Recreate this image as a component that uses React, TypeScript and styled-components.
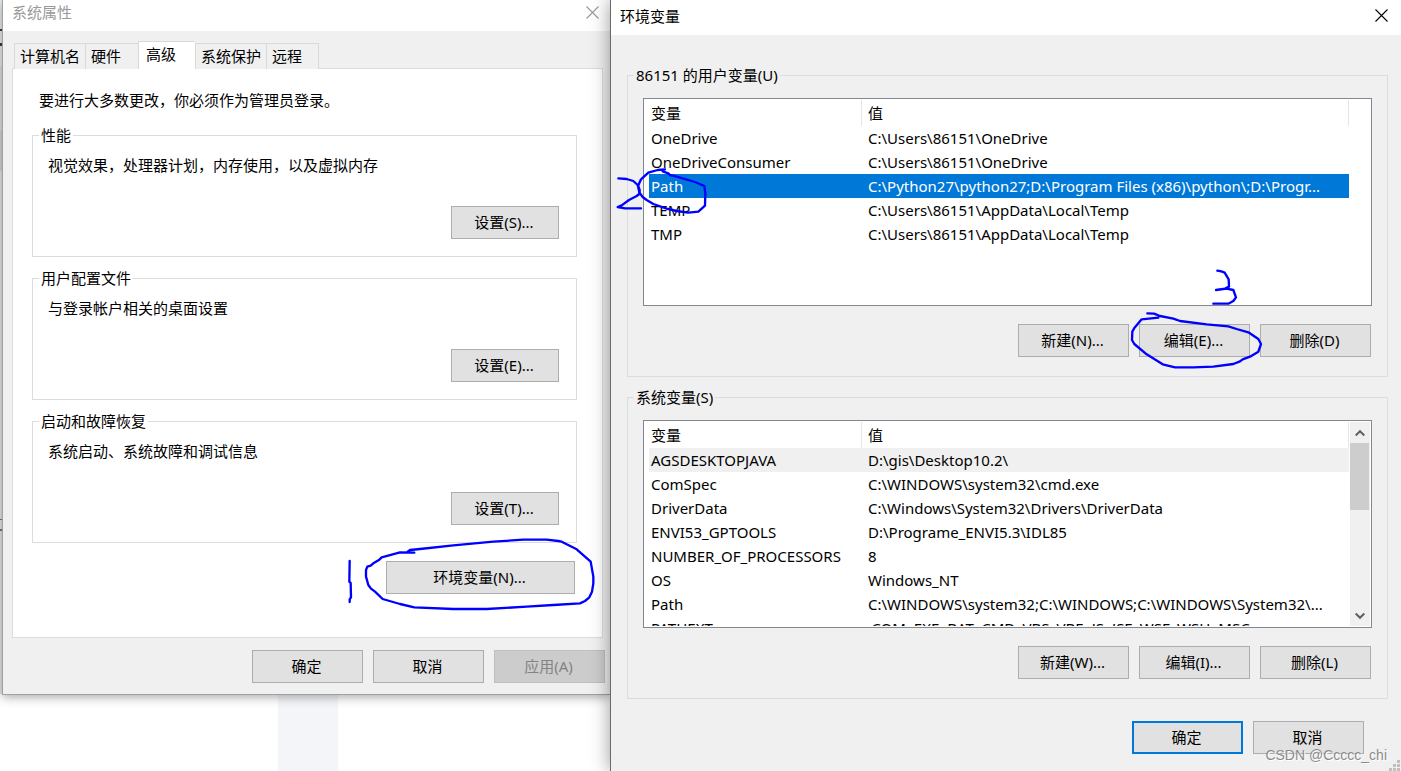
import React from "react";
import styled, { createGlobalStyle, css } from "styled-components";

const GlobalStyle = createGlobalStyle`
  *, *::before, *::after { box-sizing: border-box; }
  body {
    margin: 0;
    background: #fff;
    color: #000;
    font-family: "Noto Sans", "Noto Sans CJK SC", sans-serif;
    font-size: 15px;
    line-height: 20px;
  }
  button { font: inherit; color: inherit; }
`;

const Desktop = styled.div`
  display: grid;
  grid-template-columns: minmax(0, 610fr) minmax(0, 791fr);
  min-height: 100vh;
  overflow: hidden;
`;

/* The sliver of the page behind the dialog shows along the left edge. */
const LeftArea = styled.div`
  display: flex;
  flex-direction: column;
  padding-left: 2px;
  background: linear-gradient(
    #ececec 0 29px,
    #3c3c3c 29px 31px,
    #ececec 31px 43px,
    #3c3c3c 43px 46px,
    #ececec 46px 66px,
    #e0e0e0 66px 131px,
    #d2d6d6 131px 171px,
    #e6e6e6 171px 519px,
    #77777f 519px 520px,
    #e6e6e6 520px 529px,
    #77777f 529px 531px,
    #e6e6e6 531px 694px,
    #fff 694px
  );
`;

const Backdrop = styled.div`
  flex: 1;
  padding-left: 276px;
`;

const BackdropBand = styled.div`
  width: 60px;
  height: 100%;
  background: #f4f5f8;
`;

const Dialog = styled.section<{ $front?: boolean }>`
  position: relative;
  background: #f0f0f0;
  ${({ $front }) =>
    $front
      ? css`
          z-index: 2;
          border-left: 1px solid #6a6a6a;
          box-shadow: 0 0 18px rgba(0, 0, 0, 0.4);
        `
      : css`
          z-index: 1;
          border: solid #a0a0a0;
          border-width: 0 0 1px 1px;
          box-shadow: 0 2px 10px rgba(0, 0, 0, 0.35);
        `}
`;

const TitleBar = styled.header<{ $inactive?: boolean }>`
  display: flex;
  align-items: center;
  justify-content: space-between;
  height: ${({ $inactive }) => ($inactive ? 31 : 35)}px;
  padding: ${({ $inactive }) => ($inactive ? "0 11px 7px 9px" : "0 13px 4px 9px")};
  background: #fff;
  color: ${({ $inactive }) => ($inactive ? "#999" : "#000")};
`;

const Title = styled.h1`
  margin: 0;
  font-size: 15px;
  font-weight: 400;
`;

const CloseButton = styled.button`
  display: flex;
  padding: 0;
  border: 0;
  background: none;
`;

const TabList = styled.div`
  display: flex;
  align-items: flex-end;
  padding: 10px 0 0 11px;
`;

const Tab = styled.button<{ $active?: boolean }>`
  min-width: 53px;
  height: 26px;
  padding: 0 5px 2px;
  border: 1px solid #d9d9d9;
  border-width: 1px 0 0 1px;
  background: #f0f0f0;
  text-align: left;
  white-space: nowrap;
  &:last-child { border-right-width: 1px; }
  ${({ $active }) =>
    $active &&
    css`
      position: relative;
      z-index: 1;
      min-width: 57px;
      height: 28px;
      padding: 0 7px 3px;
      background: #fff;
    `}
`;

const TabPanel = styled.div`
  display: flex;
  flex-direction: column;
  min-height: 570px;
  margin: -1px 7px 0 9px;
  padding: 21px 25px 0 19px;
  border: 1px solid #dcdcdc;
  background: #fff;
`;

const Intro = styled.p`
  margin: 0 0 15px 7px;
`;

const Group = styled.fieldset<{ $settings?: boolean }>`
  min-width: 0;
  margin: 0 0 ${({ $settings }) => ($settings ? 11 : 10)}px;
  padding: ${({ $settings }) => ($settings ? "0 17px 17px 15px" : "0 15px 19px 15px")};
  border: 1px solid #dcdcdc;
`;

const Legend = styled.legend`
  margin-left: -9px;
  padding: 0 2px;
`;

const GroupText = styled.p`
  margin: 10px 0 31px;
`;

const ButtonRow = styled.div`
  display: flex;
  justify-content: flex-end;
  gap: 10px;
`;

const GroupActions = styled(ButtonRow)`
  margin: 18px 1px 0 0;
`;

const EnvRow = styled(ButtonRow)`
  margin: 7px 2px 0 0;
`;

const PropertiesFooter = styled(ButtonRow)`
  padding: 12px 5px 11px;
`;

const VariablesFooter = styled(ButtonRow)`
  margin-top: 22px;
  padding: 0 24px 0 0;
`;

const PushButton = styled.button<{ $width?: number; $primary?: boolean }>`
  width: ${({ $width = 111 }) => $width}px;
  height: 33px;
  padding: 0 2px 2px 0;
  border: ${({ $primary }) => ($primary ? "2px solid #0078d7" : "1px solid #adadad")};
  background: #e1e1e1;
  white-space: nowrap;
  &:disabled {
    border-color: #bfbfbf;
    background: #ccc;
    color: #838383;
  }
`;

const Marked = styled.div`
  position: relative;
`;

const Ink = styled.svg`
  position: absolute;
  z-index: 3;
  pointer-events: none;
  fill: none;
  stroke: #0000fe;
  stroke-width: 7px;
  stroke-linecap: round;
  stroke-linejoin: round;
`;

const EnvInk = styled(Ink)`
  left: -46px;
  top: -26px;
`;

const PathInk = styled(Ink)`
  left: -28px;
  top: 67px;
`;

const EditInk = styled(Ink)`
  left: -11px;
  top: -57px;
`;

const VariablesBody = styled.div`
  padding: 30px 13px 0 16px;
`;

const ListBox = styled.div`
  display: flex;
  height: 208px;
  margin-top: 13px;
  padding: 1px 1px 1px 5px;
  border: 1px solid #828790;
  background: #fff;
  overflow: hidden;
`;

const ListView = styled.div`
  flex: 1;
  min-width: 0;
  overflow: hidden;
`;

const Table = styled.table`
  width: 100%;
  table-layout: fixed;
  border-collapse: separate;
  border-spacing: 0;
`;

const HeadCell = styled.th<{ $width?: number }>`
  width: ${({ $width }) => ($width ? `${$width}px` : "auto")};
  height: 26px;
  padding: 0 0 0 ${({ $width }) => ($width ? 2 : 6)}px;
  border-right: 1px solid #e5e5e5;
  font-weight: 400;
  text-align: left;
`;

const Row = styled.tr<{ $state?: "selected" | "dim" }>`
  background: ${({ $state }) =>
    $state === "selected" ? "#0078d7" : $state === "dim" ? "#f0f0f0" : "transparent"};
  color: ${({ $state }) => ($state === "selected" ? "#fff" : "#000")};
`;

const Cell = styled.td`
  height: 24px;
  padding: 0 0 0 2px;
  white-space: nowrap;
  overflow: hidden;
  & + & { padding-left: 6px; }
`;

const ScrollTrack = styled.div<{ $hidden?: boolean }>`
  display: flex;
  flex-direction: column;
  width: 20px;
  margin-left: 1px;
  background: ${({ $hidden }) => ($hidden ? "transparent" : "#f0f0f0")};
`;

const ScrollArrow = styled.button`
  display: flex;
  align-items: center;
  justify-content: center;
  width: 19px;
  height: 21px;
  padding: 0;
  border: 0;
  background: none;
`;

const ScrollThumb = styled.div`
  width: 19px;
  height: 67px;
  margin-bottom: auto;
  background: #cdcdcd;
`;

const Watermark = styled.span`
  position: absolute;
  right: 14px;
  bottom: 6px;
  color: #8c8c8c;
  font-family: "Liberation Sans", sans-serif;
  font-size: 14px;
  text-shadow: 1px 1px 0 #fff;
  pointer-events: none;
`;

const Grip = styled.svg`
  position: absolute;
  right: 0;
  bottom: 0;
  fill: #bfbfbf;
`;

const CloseIcon = ({ color }: { color: string }) => (
  <svg width="13" height="13" viewBox="0 0 13 13" stroke={color} strokeWidth="1.1" aria-hidden="true">
    <path d="M.5.5l12 12M12.5.5l-12 12" />
  </svg>
);

const Chevron = ({ down }: { down?: boolean }) => (
  <svg width="10" height="8" viewBox="0 0 10 8" fill="none" stroke="#606060" strokeWidth="2" aria-hidden="true">
    <path d={down ? "M.7 1.5L5 5.8l4.3-4.3" : "M.7 6.5L5 2.2l4.3 4.3"} />
  </svg>
);

type Variable = { name: string; value: string; state?: "selected" | "dim" };

const userVariables: Variable[] = [
  { name: "OneDrive", value: "C:\\Users\\86151\\OneDrive" },
  { name: "OneDriveConsumer", value: "C:\\Users\\86151\\OneDrive" },
  {
    name: "Path",
    value: "C:\\Python27\\python27;D:\\Program Files (x86)\\python\\;D:\\Progr...",
    state: "selected",
  },
  { name: "TEMP", value: "C:\\Users\\86151\\AppData\\Local\\Temp" },
  { name: "TMP", value: "C:\\Users\\86151\\AppData\\Local\\Temp" },
];

const systemVariables: Variable[] = [
  { name: "AGSDESKTOPJAVA", value: "D:\\gis\\Desktop10.2\\", state: "dim" },
  { name: "ComSpec", value: "C:\\WINDOWS\\system32\\cmd.exe" },
  { name: "DriverData", value: "C:\\Windows\\System32\\Drivers\\DriverData" },
  { name: "ENVI53_GPTOOLS", value: "D:\\Programe_ENVI5.3\\IDL85" },
  { name: "NUMBER_OF_PROCESSORS", value: "8" },
  { name: "OS", value: "Windows_NT" },
  { name: "Path", value: "C:\\WINDOWS\\system32;C:\\WINDOWS;C:\\WINDOWS\\System32\\..." },
  { name: "PATHEXT", value: ".COM;.EXE;.BAT;.CMD;.VBS;.VBE;.JS;.JSE;.WSF;.WSH;.MSC" },
];

const settingsGroups = [
  { title: "性能", text: "视觉效果，处理器计划，内存使用，以及虚拟内存", action: "设置(S)..." },
  { title: "用户配置文件", text: "与登录帐户相关的桌面设置", action: "设置(E)..." },
  { title: "启动和故障恢复", text: "系统启动、系统故障和调试信息", action: "设置(T)..." },
];

const tabs = ["计算机名", "硬件", "高级", "系统保护", "远程"];

const VariableList = ({ rows, scroll }: { rows: Variable[]; scroll?: boolean }) => (
  <ListBox>
    <ListView>
      <Table>
        <thead>
          <tr>
            <HeadCell $width={213}>变量</HeadCell>
            <HeadCell>值</HeadCell>
          </tr>
        </thead>
        <tbody>
          {rows.map((row) => (
            <Row key={row.name} $state={row.state}>
              <Cell>{row.name}</Cell>
              <Cell>{row.value}</Cell>
            </Row>
          ))}
        </tbody>
      </Table>
    </ListView>
    <ScrollTrack $hidden={!scroll}>
      {scroll && (
        <>
          <ScrollArrow type="button" aria-label="向上滚动">
            <Chevron />
          </ScrollArrow>
          <ScrollThumb />
          <ScrollArrow type="button" aria-label="向下滚动">
            <Chevron down />
          </ScrollArrow>
        </>
      )}
    </ScrollTrack>
  </ListBox>
);

export default function App() {
  return (
    <>
      <GlobalStyle />
      <Desktop>
        <LeftArea>
          <Dialog>
            <TitleBar $inactive>
              <Title>系统属性</Title>
              <CloseButton type="button" aria-label="关闭">
                <CloseIcon color="#999" />
              </CloseButton>
            </TitleBar>
            <TabList role="tablist">
              {tabs.map((tab) => (
                <Tab key={tab} type="button" role="tab" aria-selected={tab === "高级"} $active={tab === "高级"}>
                  {tab}
                </Tab>
              ))}
            </TabList>
            <TabPanel role="tabpanel">
              <Intro>要进行大多数更改，你必须作为管理员登录。</Intro>
              {settingsGroups.map((group) => (
                <Group key={group.title} $settings>
                  <Legend>{group.title}</Legend>
                  <GroupText>{group.text}</GroupText>
                  <ButtonRow>
                    <PushButton type="button" $width={108}>
                      {group.action}
                    </PushButton>
                  </ButtonRow>
                </Group>
              ))}
              <EnvRow>
                <Marked>
                  <PushButton type="button" $width={189}>
                    环境变量(N)...
                  </PushButton>
                  <EnvInk width="260" height="80" viewBox="60 45 780 240" aria-hidden="true">
                    <path d="M89 123L88 185L92 189L93 232L89 238V246" />
                    <path d="M283 98L240 97L185 112L178 119L160 130L152 137L142 140L138 150V170L145 195L153 206L165 215L188 237L240 252L283 262L400 267H500L620 260L700 255L780 250L795 243L808 232L816 215L820 190V170L812 125L770 88L725 65L715 63L680 59H610L520 65L400 76L300 87L270 90L263 95" />
                  </EnvInk>
                </Marked>
              </EnvRow>
            </TabPanel>
            <PropertiesFooter>
              <PushButton type="button">确定</PushButton>
              <PushButton type="button">取消</PushButton>
              <PushButton type="button" disabled>
                应用(A)
              </PushButton>
            </PropertiesFooter>
          </Dialog>
          <Backdrop>
            <BackdropBand />
          </Backdrop>
        </LeftArea>
        <Dialog $front>
          <TitleBar>
            <Title>环境变量</Title>
            <CloseButton type="button" aria-label="关闭">
              <CloseIcon color="#000" />
            </CloseButton>
          </TitleBar>
          <VariablesBody>
            <Group>
              <Legend>86151 的用户变量(U)</Legend>
              <Marked>
                <VariableList rows={userVariables} />
                <PathInk width="95" height="52" viewBox="30 315 285 156" aria-hidden="true">
                  <path d="M40 355L65 357L85 363L98 375L104 390L103 402L95 408L72 420L50 436L38 441L60 445H108" />
                  <path d="M180 328L158 330L130 338L108 358L99 378L103 397L113 411L125 420L145 432L185 446L215 453L250 458L280 455L300 437L301 400L298 378L270 366L215 350L195 345L190 340L173 334L172 330" />
                </PathInk>
              </Marked>
              <GroupActions>
                <PushButton type="button">新建(N)...</PushButton>
                <Marked>
                  <PushButton type="button">编辑(E)...</PushButton>
                  <EditInk width="137" height="103" viewBox="384 81 411 309" aria-hidden="true">
                    <path d="M652 92L664 94L674 98L686 118L687 140L675 146L648 150L680 146L700 150L708 172L700 183L685 191H640" />
                    <path d="M442 220L462 221L480 228L520 236L540 243L620 253L685 259L710 267L745 277L775 297L783 312L775 335L750 350L728 358L720 364L700 372L640 380L580 382H525L488 373L440 343L403 312L396 300L397 275L403 264L425 238L475 233" />
                  </EditInk>
                </Marked>
                <PushButton type="button">删除(D)</PushButton>
              </GroupActions>
            </Group>
            <Group>
              <Legend>系统变量(S)</Legend>
              <VariableList rows={systemVariables} scroll />
              <GroupActions>
                <PushButton type="button">新建(W)...</PushButton>
                <PushButton type="button">编辑(I)...</PushButton>
                <PushButton type="button">删除(L)</PushButton>
              </GroupActions>
            </Group>
            <VariablesFooter>
              <PushButton type="button" $primary>
                确定
              </PushButton>
              <PushButton type="button">取消</PushButton>
            </VariablesFooter>
          </VariablesBody>
          <Watermark>CSDN @Ccccc_chi</Watermark>
          <Grip width="12" height="12" viewBox="0 0 12 12" aria-hidden="true">
            <path d="M8 1h3v3h-3zM8 5h3v3h-3zM8 9h3v3h-3zM4 5h3v3h-3zM4 9h3v3h-3zM0 9h3v3h-3z" />
          </Grip>
        </Dialog>
      </Desktop>
    </>
  );
}
